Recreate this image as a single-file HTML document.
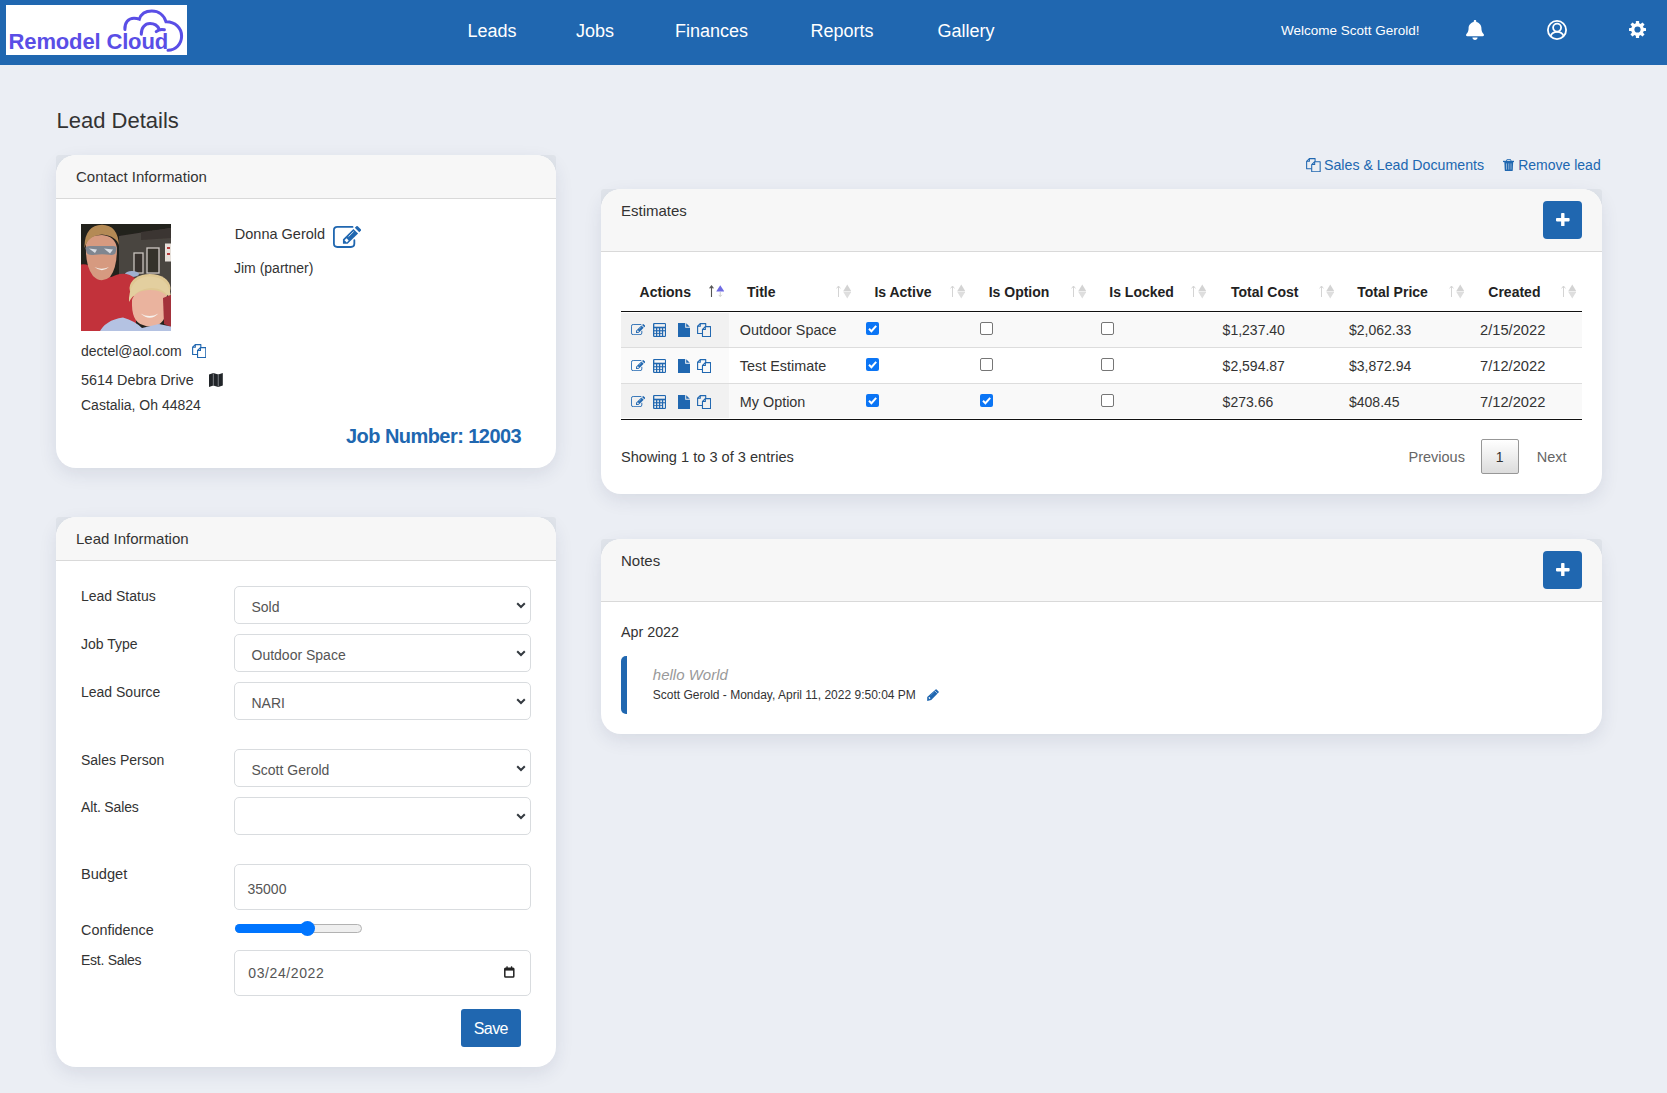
<!DOCTYPE html>
<html><head><meta charset="utf-8"><title>Lead Details</title>
<style>
html,body{margin:0;padding:0;}
body{width:1667px;height:1093px;overflow:hidden;background:#ebeef4;font-family:"Liberation Sans",sans-serif;position:relative;}
.a{position:absolute;box-sizing:border-box;}
.t{position:absolute;line-height:1;white-space:nowrap;}
</style></head><body>
<div class="a" style="left:0px;top:0px;width:1667px;height:65px;background:#2067b0;"></div>
<div class="a" style="left:6px;top:5px;width:181px;height:50px;background:#fff;"></div>
<div class="t" style="left:8.6px;top:31.2px;font-size:22px;color:#5a4ee6;font-weight:700;letter-spacing:-0.15px;">Remodel Cloud</div>
<svg class="a" style="left:120px;top:5px" width="66" height="50" viewBox="120 5 66 50">
<path d="M124.9 29.5 C124.4 22.4 128.5 18.2 134 18.2 C136 18.2 137.8 18.6 139.3 19.2 C141.2 13.4 146 11 151.8 11 C158.6 11 164 15 166 21.8 C175.2 21.6 181.6 28.2 181.6 36 C181.6 44.2 175.4 50.2 168 50.2" fill="none" stroke="#5a4ee6" stroke-width="3" stroke-linecap="round"/>
<path d="M141.3 34.3 C141 27.6 145 23.6 150 23.6 C154.2 23.6 157.6 25.8 159.2 29.2 M156.2 31.6 C158.2 29.9 161.6 29.2 164.4 29.8" fill="none" stroke="#5a4ee6" stroke-width="3" stroke-linecap="round"/>
</svg>
<div class="t" style="left:467.5px;top:21.8px;font-size:18px;color:#fff;">Leads</div>
<div class="t" style="left:576.0px;top:21.8px;font-size:18px;color:#fff;">Jobs</div>
<div class="t" style="left:675.0px;top:21.8px;font-size:18px;color:#fff;">Finances</div>
<div class="t" style="left:810.5px;top:21.8px;font-size:18px;color:#fff;">Reports</div>
<div class="t" style="left:937.5px;top:21.8px;font-size:18px;color:#fff;">Gallery</div>
<div class="t" style="left:1281.0px;top:24.1px;font-size:13.5px;color:#fff;">Welcome Scott Gerold!</div>
<svg class="a" style="left:1466px;top:20px;" width="18" height="20" viewBox="0 0 448 512" preserveAspectRatio="none"><path d="M224 0c-17.7 0-32 14.3-32 32V51.2C119 66 64 130.6 64 208v18.8c0 47-17.3 92.4-48.5 127.6l-7.4 8.3c-8.4 9.4-10.4 22.9-5.3 34.4S19.4 416 32 416H416c12.6 0 24-7.4 29.2-18.9s3.1-25-5.3-34.4l-7.4-8.3C401.3 319.2 384 273.9 384 226.8V208c0-77.4-55-142-128-156.8V32c0-17.7-14.3-32-32-32zm45.3 493.3c12-12 18.7-28.3 18.7-45.3H224 160c0 17 6.7 33.3 18.7 45.3s28.3 18.7 45.3 18.7s33.3-6.7 45.3-18.7z" fill="#fff"/></svg>
<svg class="a" style="left:1547px;top:20px;" width="20" height="20" viewBox="0 0 20 20" preserveAspectRatio="none"><circle cx="10" cy="10" r="9.1" fill="none" stroke="#fff" stroke-width="1.8"/><circle cx="10.1" cy="7.6" r="4.0" fill="none" stroke="#fff" stroke-width="1.8"/><path d="M3.6 16.2 C4.6 13.2 7 11.9 10.1 11.9 C13.2 11.9 15.6 13.2 16.6 16.2" fill="none" stroke="#fff" stroke-width="1.8"/></svg>
<svg class="a" style="left:1628.9px;top:21px;" width="17" height="17" viewBox="0 0 17 17" preserveAspectRatio="none"><circle cx="8.5" cy="8.5" r="6.4" fill="#fff"/><rect x="6.9" y="0" width="3.2" height="5" rx="0.5" transform="rotate(0 8.5 8.5)" fill="#fff"/><rect x="6.9" y="0" width="3.2" height="5" rx="0.5" transform="rotate(45 8.5 8.5)" fill="#fff"/><rect x="6.9" y="0" width="3.2" height="5" rx="0.5" transform="rotate(90 8.5 8.5)" fill="#fff"/><rect x="6.9" y="0" width="3.2" height="5" rx="0.5" transform="rotate(135 8.5 8.5)" fill="#fff"/><rect x="6.9" y="0" width="3.2" height="5" rx="0.5" transform="rotate(180 8.5 8.5)" fill="#fff"/><rect x="6.9" y="0" width="3.2" height="5" rx="0.5" transform="rotate(225 8.5 8.5)" fill="#fff"/><rect x="6.9" y="0" width="3.2" height="5" rx="0.5" transform="rotate(270 8.5 8.5)" fill="#fff"/><rect x="6.9" y="0" width="3.2" height="5" rx="0.5" transform="rotate(315 8.5 8.5)" fill="#fff"/><circle cx="8.5" cy="8.5" r="3.1" fill="#2067b0"/></svg>
<div class="t" style="left:56.5px;top:110.4px;font-size:22px;color:#333;">Lead Details</div>
<div class="a" style="left:56px;top:155px;width:500px;height:24px;background:#e1e5eb;border-radius:3px;"></div>
<div class="a" style="left:56px;top:155px;width:500px;height:313px;background:#fff;border-radius:20px;box-shadow:0 6px 18px rgba(40,50,90,0.10);overflow:hidden;"></div>
<div class="a" style="left:56px;top:155px;width:500px;height:44px;background:#f7f7f7;border-radius:20px 20px 0 0;border-bottom:1px solid #d9d9d9;"></div>
<div class="t" style="left:76.0px;top:169.3px;font-size:15px;color:#333;">Contact Information</div>
<svg class="a" style="left:81px;top:224px" width="90" height="107" viewBox="0 0 90 107">
<defs><filter id="bl" x="-5%" y="-5%" width="110%" height="110%"><feGaussianBlur stdDeviation="0.6"/></filter><clipPath id="cp"><rect width="90" height="107"/></clipPath></defs>
<g clip-path="url(#cp)"><g filter="url(#bl)">
<rect x="-2" y="-2" width="94" height="111" fill="#24201d"/>
<path d="M38 12 L90 4 V72 H38 Z" fill="#4a4440"/>
<path d="M60 8 L90 4 V14 L60 16 Z" fill="#3a3531"/>
<rect x="53" y="29" width="9" height="20" fill="#38332f" stroke="#c9c4be" stroke-width="1.3"/>
<rect x="66" y="24" width="12" height="25" fill="#35302c" stroke="#cfcac4" stroke-width="1.3"/>
<rect x="84" y="19.5" width="7" height="18" fill="#e6e0da"/>
<rect x="86" y="23" width="3" height="2" fill="#b43a3a"/><rect x="86" y="29" width="3" height="2" fill="#b43a3a"/>
<ellipse cx="51" cy="50" rx="7" ry="3" fill="#a0b0d0"/>
<path d="M-2 41 Q6 38 13 46 Q22 58 35 51 Q46 47 55 55 L55 109 H-2 Z" fill="#c2313a"/>
<path d="M5 20 Q4 42 12 52 Q20 60 29 53 Q36 44 36 24 Q34 12 21 11 Q7 11 5 20 Z" fill="#d69a80"/>
<path d="M3.5 22 Q4 1.5 21 0.8 Q37 1 38 22 Q36 12 21 10.5 Q7 11.5 3.5 24 Z" fill="#b48a55"/>
<path d="M4.5 24 Q5 22 9 22 L32 22 Q36 22 35.6 25 L34.3 29.6 Q33 31.6 28.5 30.8 Q21 29.5 14 30.8 Q6.5 31.8 5.6 28.6 Z" fill="#7f8690"/>
<path d="M8 24.5 L16 25.5 L14 29 Z M23 24.5 L32 25.5 L29 29.5 Z" fill="#d9dde3"/>
<path d="M13.5 43 Q20.5 46.5 28 43 Q21 49.5 13.5 43 Z" fill="#f3efe9"/>
<ellipse cx="69" cy="64" rx="20.5" ry="14" fill="#dfc893"/>
<path d="M51 76 Q50 98 62 101 Q69 104 77 101 Q87 96 86.5 74 Q83 66 69 66 Q54 66 51 76 Z" fill="#eab39e"/>
<path d="M48 74 Q50 52 70 52.5 Q90 54 90 76 Q84 64 70 64 Q55 65 48 78 Z" fill="#e3cf9f"/>
<path d="M82 74 L92 70 V104 L83 100 Z" fill="#a3303a"/>
<path d="M59.5 89.5 Q68.5 94.5 77.5 89.5 Q69 98 59.5 89.5 Z" fill="#f6f2ee"/>
<path d="M18 109 Q24 96 42 93.5 Q54 97 61 104 L78 100 L92 103 V109 Z" fill="#b4c2e2"/>
</g></g>
</svg>
<div class="t" style="left:234.8px;top:227.4px;font-size:14.5px;color:#333;">Donna Gerold</div>
<svg class="a" style="left:333px;top:226px;" width="28.2" height="22" viewBox="0 0 28 22" preserveAspectRatio="none"><path d="M19.4 0.9H4.3Q0.9 0.9 0.9 4.3V17.6Q0.9 21 4.3 21H17.8Q21.2 21 21.2 17.6V14.2" fill="none" stroke="#2067b0" stroke-width="1.8" stroke-linecap="round"/><path d="M20.3 3.0L24.9 7.4L14.5 17.8H9.9V13.3Z" fill="#2067b0"/><path d="M21.7 1.8L23.2 0.3Q23.9 -0.3 24.6 0.3L27.6 3.3Q28.2 4 27.6 4.7L26.1 6.2Z" fill="#2067b0"/><path d="M11.4 14.3L13.4 12.3L15.6 14.5L13.7 16.5Z" fill="#fff"/><path d="M11.4 15.2L12.9 16.6H11.4Z" fill="#2067b0"/><path d="M15.4 10.6L20.5 5.5" stroke="#fff" stroke-width="0.8"/></svg>
<div class="t" style="left:234.0px;top:260.5px;font-size:14px;color:#333;">Jim (partner)</div>
<div class="t" style="left:81.0px;top:344.1px;font-size:14px;color:#333;">dectel@aol.com</div>
<svg class="a" style="left:191.6px;top:343.8px;" width="14.4" height="14.2" viewBox="0 0 14 14" preserveAspectRatio="none"><path d="M3.2 0.6H8.6V10.4H0.6V3.2Z" fill="#fff" stroke="#2067b0" stroke-width="1.1" stroke-linejoin="round"/><path d="M0.8 3.2H3.2V0.8" fill="none" stroke="#2067b0" stroke-width="1.1"/><path d="M8.2 3.6H13.4V13.4H5.4V6.4Z" fill="#fff" stroke="#2067b0" stroke-width="1.1" stroke-linejoin="round"/><path d="M5.6 6.4H8.2V3.8" fill="none" stroke="#2067b0" stroke-width="1.1"/></svg>
<div class="t" style="left:81.0px;top:373.4px;font-size:14.4px;color:#333;">5614 Debra Drive</div>
<svg class="a" style="left:209.3px;top:373px;" width="13.8" height="14" viewBox="0 0 14 14" preserveAspectRatio="none"><path d="M0 1.6L4.4 0L9.4 1.6L14 0V12.4L9.4 14L4.4 12.4L0 14Z" fill="#212529"/><path d="M4.4 0.4V12.4M9.4 1.8V13.6" stroke="#8a8e92" stroke-width="0.9"/></svg>
<div class="t" style="left:81.0px;top:397.6px;font-size:14px;color:#333;">Castalia, Oh 44824</div>
<div class="t" style="left:346.0px;top:426.1px;font-size:20px;color:#2067b0;font-weight:700;letter-spacing:-0.55px;">Job Number: 12003</div>
<div class="a" style="left:56px;top:517px;width:500px;height:24px;background:#e1e5eb;border-radius:3px;"></div>
<div class="a" style="left:56px;top:517px;width:500px;height:550px;background:#fff;border-radius:20px;box-shadow:0 6px 18px rgba(40,50,90,0.10);overflow:hidden;"></div>
<div class="a" style="left:56px;top:517px;width:500px;height:44px;background:#f7f7f7;border-radius:20px 20px 0 0;border-bottom:1px solid #d9d9d9;"></div>
<div class="t" style="left:76.0px;top:531.1px;font-size:15px;color:#333;">Lead Information</div>
<div class="t" style="left:81.0px;top:589.1px;font-size:14px;color:#333;">Lead Status</div>
<div class="t" style="left:81.0px;top:637.1px;font-size:14px;color:#333;">Job Type</div>
<div class="t" style="left:81.0px;top:685.4px;font-size:14px;color:#333;">Lead Source</div>
<div class="t" style="left:81.0px;top:752.7px;font-size:14px;color:#333;">Sales Person</div>
<div class="t" style="left:81.0px;top:800.1px;font-size:14px;color:#333;letter-spacing:-0.15px;">Alt. Sales</div>
<div class="t" style="left:81.0px;top:867.0px;font-size:14.6px;color:#333;">Budget</div>
<div class="t" style="left:81.0px;top:923.1px;font-size:14.4px;color:#333;">Confidence</div>
<div class="t" style="left:81.0px;top:953.1px;font-size:14px;color:#333;letter-spacing:-0.27px;">Est. Sales</div>
<div class="a" style="left:234px;top:586px;width:297px;height:38px;background:#fff;border:1px solid #d9dcdf;border-radius:5px;"></div>
<div class="t" style="left:251.5px;top:599.6px;font-size:14px;color:#555;">Sold</div>
<svg class="a" style="left:516px;top:602px;" width="10" height="7" viewBox="0 0 10 7" preserveAspectRatio="none"><path d="M1.2 1.2 L5 5 L8.8 1.2" fill="none" stroke="#343a40" stroke-width="2"/></svg>
<div class="a" style="left:234px;top:634px;width:297px;height:38px;background:#fff;border:1px solid #d9dcdf;border-radius:5px;"></div>
<div class="t" style="left:251.5px;top:647.6px;font-size:14px;color:#555;">Outdoor Space</div>
<svg class="a" style="left:516px;top:650px;" width="10" height="7" viewBox="0 0 10 7" preserveAspectRatio="none"><path d="M1.2 1.2 L5 5 L8.8 1.2" fill="none" stroke="#343a40" stroke-width="2"/></svg>
<div class="a" style="left:234px;top:682px;width:297px;height:38px;background:#fff;border:1px solid #d9dcdf;border-radius:5px;"></div>
<div class="t" style="left:251.5px;top:695.6px;font-size:14px;color:#555;">NARI</div>
<svg class="a" style="left:516px;top:698px;" width="10" height="7" viewBox="0 0 10 7" preserveAspectRatio="none"><path d="M1.2 1.2 L5 5 L8.8 1.2" fill="none" stroke="#343a40" stroke-width="2"/></svg>
<div class="a" style="left:234px;top:749px;width:297px;height:38px;background:#fff;border:1px solid #d9dcdf;border-radius:5px;"></div>
<div class="t" style="left:251.5px;top:762.6px;font-size:14px;color:#555;">Scott Gerold</div>
<svg class="a" style="left:516px;top:765px;" width="10" height="7" viewBox="0 0 10 7" preserveAspectRatio="none"><path d="M1.2 1.2 L5 5 L8.8 1.2" fill="none" stroke="#343a40" stroke-width="2"/></svg>
<div class="a" style="left:234px;top:797px;width:297px;height:38px;background:#fff;border:1px solid #d9dcdf;border-radius:5px;"></div>
<svg class="a" style="left:516px;top:813px;" width="10" height="7" viewBox="0 0 10 7" preserveAspectRatio="none"><path d="M1.2 1.2 L5 5 L8.8 1.2" fill="none" stroke="#343a40" stroke-width="2"/></svg>
<div class="a" style="left:234px;top:864px;width:297px;height:46px;background:#fff;border:1px solid #d9dcdf;border-radius:5px;"></div>
<div class="t" style="left:247.5px;top:881.5px;font-size:14px;color:#555;">35000</div>
<div class="a" style="left:234.5px;top:923.5px;width:127.5px;height:9px;background:#efefef;border:1px solid #b2b2b2;border-radius:5px;"></div>
<div class="a" style="left:234.5px;top:923.5px;width:74px;height:9px;background:#0075ff;border-radius:5px 0 0 5px;"></div>
<div class="a" style="left:299.5px;top:920.5px;width:15px;height:15px;background:#0075ff;border-radius:50%;"></div>
<div class="a" style="left:234px;top:950px;width:297px;height:46px;background:#fff;border:1px solid #d9dcdf;border-radius:5px;"></div>
<div class="t" style="left:248.3px;top:966.3px;font-size:14px;color:#555;letter-spacing:0.6px;">03/24/2022</div>
<svg class="a" style="left:504px;top:966px;" width="10.6" height="11.8" viewBox="0 0 10.6 11.8" preserveAspectRatio="none"><rect x="0.8" y="2.2" width="9" height="8.8" rx="0.8" fill="none" stroke="#222" stroke-width="1.5"/><rect x="0.8" y="2" width="9" height="2.6" fill="#222"/><rect x="2.4" y="0.3" width="1.3" height="2.4" fill="#222"/><rect x="6.9" y="0.3" width="1.3" height="2.4" fill="#222"/></svg>
<div class="a" style="left:461px;top:1009px;width:60px;height:38px;background:#2067b0;border-radius:3px;"></div>
<div class="t" style="left:473.8px;top:1020.5px;font-size:16px;color:#fff;letter-spacing:-0.6px;">Save</div>
<svg class="a" style="left:1305.8px;top:157.7px;" width="14.8" height="14.4" viewBox="0 0 14 14" preserveAspectRatio="none"><path d="M3.2 0.6H8.6V10.4H0.6V3.2Z" fill="#ebeef3" stroke="#2067b0" stroke-width="1.0" stroke-linejoin="round"/><path d="M0.8 3.2H3.2V0.8" fill="none" stroke="#2067b0" stroke-width="1.0"/><path d="M8.2 3.6H13.4V13.4H5.4V6.4Z" fill="#ebeef3" stroke="#2067b0" stroke-width="1.0" stroke-linejoin="round"/><path d="M5.6 6.4H8.2V3.8" fill="none" stroke="#2067b0" stroke-width="1.0"/></svg>
<div class="t" style="left:1324.0px;top:157.7px;font-size:14.2px;color:#2067b0;">Sales &amp; Lead Documents</div>
<svg class="a" style="left:1502.9px;top:158.9px;" width="11.5" height="12.1" viewBox="0 0 11.5 12.1" preserveAspectRatio="none"><path d="M3.4 1.9L4.2 0.3H7.3L8.1 1.9" fill="none" stroke="#2067b0" stroke-width="1"/><path d="M0 1.8H11.5V3.1H0Z" fill="#2067b0"/><path d="M1.3 3.1H10.2L9.7 11.4Q9.6 12.1 9 12.1H2.5Q1.9 12.1 1.8 11.4Z" fill="#2067b0"/><path d="M3.5 4.4V10.6M5.75 4.4V10.6M8 4.4V10.6" stroke="#aac3de" stroke-width="0.8"/></svg>
<div class="t" style="left:1518.2px;top:157.8px;font-size:14px;color:#2067b0;">Remove lead</div>
<div class="a" style="left:601px;top:189px;width:1001px;height:24px;background:#e1e5eb;border-radius:3px;"></div>
<div class="a" style="left:601px;top:189px;width:1001px;height:305px;background:#fff;border-radius:20px;box-shadow:0 6px 18px rgba(40,50,90,0.10);overflow:hidden;"></div>
<div class="a" style="left:601px;top:189px;width:1001px;height:63px;background:#f7f7f7;border-radius:20px 20px 0 0;border-bottom:1px solid #d9d9d9;"></div>
<div class="t" style="left:621.0px;top:203.3px;font-size:15px;color:#333;">Estimates</div>
<div class="a" style="left:1543px;top:201px;width:39px;height:38px;background:#2067b0;border-radius:4px;"></div>
<svg class="a" style="left:1556px;top:213px;" width="13.6" height="13.4" viewBox="0 0 13.6 13.4" preserveAspectRatio="none"><rect x="5.1" y="0" width="3.4" height="13.4" rx="0.8" fill="#fff"/><rect x="0" y="5" width="13.6" height="3.4" rx="0.8" fill="#fff"/></svg>
<div class="a" style="left:621px;top:311px;width:961px;height:1px;background:#111;"></div>
<div class="a" style="left:621px;top:313px;width:961px;height:34px;background:#f9f9f9;"></div>
<div class="a" style="left:621px;top:313px;width:108px;height:34px;background:#f1f1f1;"></div>
<svg class="a" style="left:631.1px;top:323.7px;" width="14.3" height="11.2" viewBox="0 0 28 22" preserveAspectRatio="none"><path d="M19.4 0.9H4.3Q0.9 0.9 0.9 4.3V17.6Q0.9 21 4.3 21H17.8Q21.2 21 21.2 17.6V14.2" fill="none" stroke="#2067b0" stroke-width="1.8" stroke-linecap="round"/><path d="M20.3 3.0L24.9 7.4L14.5 17.8H9.9V13.3Z" fill="#2067b0"/><path d="M21.7 1.8L23.2 0.3Q23.9 -0.3 24.6 0.3L27.6 3.3Q28.2 4 27.6 4.7L26.1 6.2Z" fill="#2067b0"/><path d="M11.4 14.3L13.4 12.3L15.6 14.5L13.7 16.5Z" fill="#f1f1f1"/><path d="M11.4 15.2L12.9 16.6H11.4Z" fill="#2067b0"/><path d="M15.4 10.6L20.5 5.5" stroke="#f1f1f1" stroke-width="0.8"/></svg>
<svg class="a" style="left:652.5px;top:323px;" width="13" height="14" viewBox="0 0 13 14" preserveAspectRatio="none"><rect x="0" y="0" width="13" height="14" rx="1.2" fill="#2067b0"/><rect x="1.35" y="1.1" width="10.6" height="2.6" fill="#f1f1f1"/><rect x="1.35" y="5.3" width="1.6" height="1.9" fill="#f1f1f1"/><rect x="1.35" y="8.3" width="1.6" height="1.9" fill="#f1f1f1"/><rect x="1.35" y="11.0" width="1.6" height="1.9" fill="#f1f1f1"/><rect x="4.3" y="5.3" width="1.6" height="1.9" fill="#f1f1f1"/><rect x="4.3" y="8.3" width="1.6" height="1.9" fill="#f1f1f1"/><rect x="4.3" y="11.0" width="1.6" height="1.9" fill="#f1f1f1"/><rect x="7.3" y="5.3" width="1.6" height="1.9" fill="#f1f1f1"/><rect x="7.3" y="8.3" width="1.6" height="1.9" fill="#f1f1f1"/><rect x="7.3" y="11.0" width="1.6" height="1.9" fill="#f1f1f1"/><rect x="10.2" y="5.3" width="1.7" height="1.9" fill="#f1f1f1"/><rect x="10.2" y="8.3" width="1.7" height="4.6" fill="#f1f1f1"/></svg>
<svg class="a" style="left:677.5px;top:323px;" width="12" height="14" viewBox="0 0 12 14" preserveAspectRatio="none"><path d="M0 0H7.2V4.8H12V14H0Z" fill="#2067b0"/><path d="M8.2 0.2L11.8 3.8H8.2Z" fill="#2067b0"/></svg>
<svg class="a" style="left:696.8px;top:322.8px;" width="14.2" height="14.2" viewBox="0 0 14 14" preserveAspectRatio="none"><path d="M3.2 0.6H8.6V10.4H0.6V3.2Z" fill="#f1f1f1" stroke="#2067b0" stroke-width="1.1" stroke-linejoin="round"/><path d="M0.8 3.2H3.2V0.8" fill="none" stroke="#2067b0" stroke-width="1.1"/><path d="M8.2 3.6H13.4V13.4H5.4V6.4Z" fill="#f1f1f1" stroke="#2067b0" stroke-width="1.1" stroke-linejoin="round"/><path d="M5.6 6.4H8.2V3.8" fill="none" stroke="#2067b0" stroke-width="1.1"/></svg>
<div class="t" style="left:739.8px;top:322.8px;font-size:14.4px;color:#333;">Outdoor Space</div>
<svg class="a" style="left:866px;top:322px;" width="13" height="13" viewBox="0 0 13 13" preserveAspectRatio="none"><rect x="0" y="0" width="13" height="13" rx="2" fill="#0b75f5"/><path d="M3 6.8 L5.4 9.2 L10.2 3.8" fill="none" stroke="#fff" stroke-width="2"/></svg>
<div class="a" style="left:980px;top:322px;width:13px;height:13px;background:#fff;border:1px solid #767676;border-radius:2px;"></div>
<div class="a" style="left:1101px;top:322px;width:13px;height:13px;background:#fff;border:1px solid #767676;border-radius:2px;"></div>
<div class="t" style="left:1222.6px;top:323.1px;font-size:14px;color:#333;">$1,237.40</div>
<div class="t" style="left:1349.0px;top:323.1px;font-size:14px;color:#333;">$2,062.33</div>
<div class="t" style="left:1480.0px;top:322.6px;font-size:14.7px;color:#333;">2/15/2022</div>
<div class="a" style="left:621px;top:348px;width:961px;height:35px;background:#fff;"></div>
<div class="a" style="left:621px;top:348px;width:108px;height:35px;background:#fafafa;"></div>
<div class="a" style="left:621px;top:347px;width:961px;height:1px;background:#ddd;"></div>
<svg class="a" style="left:631.1px;top:359.7px;" width="14.3" height="11.2" viewBox="0 0 28 22" preserveAspectRatio="none"><path d="M19.4 0.9H4.3Q0.9 0.9 0.9 4.3V17.6Q0.9 21 4.3 21H17.8Q21.2 21 21.2 17.6V14.2" fill="none" stroke="#2067b0" stroke-width="1.8" stroke-linecap="round"/><path d="M20.3 3.0L24.9 7.4L14.5 17.8H9.9V13.3Z" fill="#2067b0"/><path d="M21.7 1.8L23.2 0.3Q23.9 -0.3 24.6 0.3L27.6 3.3Q28.2 4 27.6 4.7L26.1 6.2Z" fill="#2067b0"/><path d="M11.4 14.3L13.4 12.3L15.6 14.5L13.7 16.5Z" fill="#fafafa"/><path d="M11.4 15.2L12.9 16.6H11.4Z" fill="#2067b0"/><path d="M15.4 10.6L20.5 5.5" stroke="#fafafa" stroke-width="0.8"/></svg>
<svg class="a" style="left:652.5px;top:359px;" width="13" height="14" viewBox="0 0 13 14" preserveAspectRatio="none"><rect x="0" y="0" width="13" height="14" rx="1.2" fill="#2067b0"/><rect x="1.35" y="1.1" width="10.6" height="2.6" fill="#fafafa"/><rect x="1.35" y="5.3" width="1.6" height="1.9" fill="#fafafa"/><rect x="1.35" y="8.3" width="1.6" height="1.9" fill="#fafafa"/><rect x="1.35" y="11.0" width="1.6" height="1.9" fill="#fafafa"/><rect x="4.3" y="5.3" width="1.6" height="1.9" fill="#fafafa"/><rect x="4.3" y="8.3" width="1.6" height="1.9" fill="#fafafa"/><rect x="4.3" y="11.0" width="1.6" height="1.9" fill="#fafafa"/><rect x="7.3" y="5.3" width="1.6" height="1.9" fill="#fafafa"/><rect x="7.3" y="8.3" width="1.6" height="1.9" fill="#fafafa"/><rect x="7.3" y="11.0" width="1.6" height="1.9" fill="#fafafa"/><rect x="10.2" y="5.3" width="1.7" height="1.9" fill="#fafafa"/><rect x="10.2" y="8.3" width="1.7" height="4.6" fill="#fafafa"/></svg>
<svg class="a" style="left:677.5px;top:359px;" width="12" height="14" viewBox="0 0 12 14" preserveAspectRatio="none"><path d="M0 0H7.2V4.8H12V14H0Z" fill="#2067b0"/><path d="M8.2 0.2L11.8 3.8H8.2Z" fill="#2067b0"/></svg>
<svg class="a" style="left:696.8px;top:358.8px;" width="14.2" height="14.2" viewBox="0 0 14 14" preserveAspectRatio="none"><path d="M3.2 0.6H8.6V10.4H0.6V3.2Z" fill="#fafafa" stroke="#2067b0" stroke-width="1.1" stroke-linejoin="round"/><path d="M0.8 3.2H3.2V0.8" fill="none" stroke="#2067b0" stroke-width="1.1"/><path d="M8.2 3.6H13.4V13.4H5.4V6.4Z" fill="#fafafa" stroke="#2067b0" stroke-width="1.1" stroke-linejoin="round"/><path d="M5.6 6.4H8.2V3.8" fill="none" stroke="#2067b0" stroke-width="1.1"/></svg>
<div class="t" style="left:739.8px;top:358.8px;font-size:14.4px;color:#333;">Test Estimate</div>
<svg class="a" style="left:866px;top:358px;" width="13" height="13" viewBox="0 0 13 13" preserveAspectRatio="none"><rect x="0" y="0" width="13" height="13" rx="2" fill="#0b75f5"/><path d="M3 6.8 L5.4 9.2 L10.2 3.8" fill="none" stroke="#fff" stroke-width="2"/></svg>
<div class="a" style="left:980px;top:358px;width:13px;height:13px;background:#fff;border:1px solid #767676;border-radius:2px;"></div>
<div class="a" style="left:1101px;top:358px;width:13px;height:13px;background:#fff;border:1px solid #767676;border-radius:2px;"></div>
<div class="t" style="left:1222.6px;top:359.1px;font-size:14px;color:#333;">$2,594.87</div>
<div class="t" style="left:1349.0px;top:359.1px;font-size:14px;color:#333;">$3,872.94</div>
<div class="t" style="left:1480.0px;top:358.6px;font-size:14.7px;color:#333;">7/12/2022</div>
<div class="a" style="left:621px;top:384px;width:961px;height:34px;background:#f9f9f9;"></div>
<div class="a" style="left:621px;top:384px;width:108px;height:34px;background:#f1f1f1;"></div>
<div class="a" style="left:621px;top:383px;width:961px;height:1px;background:#ddd;"></div>
<svg class="a" style="left:631.1px;top:395.7px;" width="14.3" height="11.2" viewBox="0 0 28 22" preserveAspectRatio="none"><path d="M19.4 0.9H4.3Q0.9 0.9 0.9 4.3V17.6Q0.9 21 4.3 21H17.8Q21.2 21 21.2 17.6V14.2" fill="none" stroke="#2067b0" stroke-width="1.8" stroke-linecap="round"/><path d="M20.3 3.0L24.9 7.4L14.5 17.8H9.9V13.3Z" fill="#2067b0"/><path d="M21.7 1.8L23.2 0.3Q23.9 -0.3 24.6 0.3L27.6 3.3Q28.2 4 27.6 4.7L26.1 6.2Z" fill="#2067b0"/><path d="M11.4 14.3L13.4 12.3L15.6 14.5L13.7 16.5Z" fill="#f1f1f1"/><path d="M11.4 15.2L12.9 16.6H11.4Z" fill="#2067b0"/><path d="M15.4 10.6L20.5 5.5" stroke="#f1f1f1" stroke-width="0.8"/></svg>
<svg class="a" style="left:652.5px;top:395px;" width="13" height="14" viewBox="0 0 13 14" preserveAspectRatio="none"><rect x="0" y="0" width="13" height="14" rx="1.2" fill="#2067b0"/><rect x="1.35" y="1.1" width="10.6" height="2.6" fill="#f1f1f1"/><rect x="1.35" y="5.3" width="1.6" height="1.9" fill="#f1f1f1"/><rect x="1.35" y="8.3" width="1.6" height="1.9" fill="#f1f1f1"/><rect x="1.35" y="11.0" width="1.6" height="1.9" fill="#f1f1f1"/><rect x="4.3" y="5.3" width="1.6" height="1.9" fill="#f1f1f1"/><rect x="4.3" y="8.3" width="1.6" height="1.9" fill="#f1f1f1"/><rect x="4.3" y="11.0" width="1.6" height="1.9" fill="#f1f1f1"/><rect x="7.3" y="5.3" width="1.6" height="1.9" fill="#f1f1f1"/><rect x="7.3" y="8.3" width="1.6" height="1.9" fill="#f1f1f1"/><rect x="7.3" y="11.0" width="1.6" height="1.9" fill="#f1f1f1"/><rect x="10.2" y="5.3" width="1.7" height="1.9" fill="#f1f1f1"/><rect x="10.2" y="8.3" width="1.7" height="4.6" fill="#f1f1f1"/></svg>
<svg class="a" style="left:677.5px;top:395px;" width="12" height="14" viewBox="0 0 12 14" preserveAspectRatio="none"><path d="M0 0H7.2V4.8H12V14H0Z" fill="#2067b0"/><path d="M8.2 0.2L11.8 3.8H8.2Z" fill="#2067b0"/></svg>
<svg class="a" style="left:696.8px;top:394.8px;" width="14.2" height="14.2" viewBox="0 0 14 14" preserveAspectRatio="none"><path d="M3.2 0.6H8.6V10.4H0.6V3.2Z" fill="#f1f1f1" stroke="#2067b0" stroke-width="1.1" stroke-linejoin="round"/><path d="M0.8 3.2H3.2V0.8" fill="none" stroke="#2067b0" stroke-width="1.1"/><path d="M8.2 3.6H13.4V13.4H5.4V6.4Z" fill="#f1f1f1" stroke="#2067b0" stroke-width="1.1" stroke-linejoin="round"/><path d="M5.6 6.4H8.2V3.8" fill="none" stroke="#2067b0" stroke-width="1.1"/></svg>
<div class="t" style="left:739.8px;top:394.8px;font-size:14.4px;color:#333;">My Option</div>
<svg class="a" style="left:866px;top:394px;" width="13" height="13" viewBox="0 0 13 13" preserveAspectRatio="none"><rect x="0" y="0" width="13" height="13" rx="2" fill="#0b75f5"/><path d="M3 6.8 L5.4 9.2 L10.2 3.8" fill="none" stroke="#fff" stroke-width="2"/></svg>
<svg class="a" style="left:980px;top:394px;" width="13" height="13" viewBox="0 0 13 13" preserveAspectRatio="none"><rect x="0" y="0" width="13" height="13" rx="2" fill="#0b75f5"/><path d="M3 6.8 L5.4 9.2 L10.2 3.8" fill="none" stroke="#fff" stroke-width="2"/></svg>
<div class="a" style="left:1101px;top:394px;width:13px;height:13px;background:#fff;border:1px solid #767676;border-radius:2px;"></div>
<div class="t" style="left:1222.6px;top:395.1px;font-size:14px;color:#333;">$273.66</div>
<div class="t" style="left:1349.0px;top:395.1px;font-size:14px;color:#333;">$408.45</div>
<div class="t" style="left:1480.0px;top:394.6px;font-size:14.7px;color:#333;">7/12/2022</div>
<div class="a" style="left:621px;top:419px;width:961px;height:1px;background:#111;"></div>
<div class="t" style="left:639.6px;top:285.1px;font-size:14px;color:#222;font-weight:700;">Actions</div>
<svg class="a" style="left:708.5px;top:285px;" width="5" height="12" viewBox="0 0 5 12" preserveAspectRatio="none"><path d="M2.5 1V12M0.6 3.4L2.5 1L4.4 3.4" fill="none" stroke="#555" stroke-width="1.1"/></svg>
<svg class="a" style="left:715.5px;top:285px;" width="8.5" height="12" viewBox="0 0 8.5 12" preserveAspectRatio="none"><path d="M4.25 0.3 L8.3 6.5 L0.2 6.5 Z" fill="#6f6be3"/><path d="M4.25 7V11.5M2.6 9.8L4.25 11.5L5.9 9.8" fill="none" stroke="#c8c8c8" stroke-width="0.9"/></svg>
<div class="t" style="left:747.0px;top:285.1px;font-size:14px;color:#222;font-weight:700;">Title</div>
<svg class="a" style="left:835.5px;top:285px;" width="5" height="12" viewBox="0 0 5 12" preserveAspectRatio="none"><path d="M2.5 1V12M0.6 3.4L2.5 1L4.4 3.4" fill="none" stroke="#d4d4d4" stroke-width="1"/></svg>
<svg class="a" style="left:842.5px;top:284px;" width="8.5" height="15" viewBox="0 0 8.5 15" preserveAspectRatio="none"><path d="M4.25 0.5 L8.3 7.2 L0.2 7.2 Z" fill="#d3d3d3"/><path d="M4.25 14.5 L8.3 7.8 L0.2 7.8 Z" fill="#dedede"/></svg>
<div class="t" style="left:874.4px;top:285.1px;font-size:14px;color:#222;font-weight:700;">Is Active</div>
<svg class="a" style="left:949.5px;top:285px;" width="5" height="12" viewBox="0 0 5 12" preserveAspectRatio="none"><path d="M2.5 1V12M0.6 3.4L2.5 1L4.4 3.4" fill="none" stroke="#d4d4d4" stroke-width="1"/></svg>
<svg class="a" style="left:956.5px;top:284px;" width="8.5" height="15" viewBox="0 0 8.5 15" preserveAspectRatio="none"><path d="M4.25 0.5 L8.3 7.2 L0.2 7.2 Z" fill="#d3d3d3"/><path d="M4.25 14.5 L8.3 7.8 L0.2 7.8 Z" fill="#dedede"/></svg>
<div class="t" style="left:988.7px;top:285.1px;font-size:14px;color:#222;font-weight:700;">Is Option</div>
<svg class="a" style="left:1070.5px;top:285px;" width="5" height="12" viewBox="0 0 5 12" preserveAspectRatio="none"><path d="M2.5 1V12M0.6 3.4L2.5 1L4.4 3.4" fill="none" stroke="#d4d4d4" stroke-width="1"/></svg>
<svg class="a" style="left:1077.5px;top:284px;" width="8.5" height="15" viewBox="0 0 8.5 15" preserveAspectRatio="none"><path d="M4.25 0.5 L8.3 7.2 L0.2 7.2 Z" fill="#d3d3d3"/><path d="M4.25 14.5 L8.3 7.8 L0.2 7.8 Z" fill="#dedede"/></svg>
<div class="t" style="left:1109.3px;top:285.1px;font-size:14px;color:#222;font-weight:700;">Is Locked</div>
<svg class="a" style="left:1190.5px;top:285px;" width="5" height="12" viewBox="0 0 5 12" preserveAspectRatio="none"><path d="M2.5 1V12M0.6 3.4L2.5 1L4.4 3.4" fill="none" stroke="#d4d4d4" stroke-width="1"/></svg>
<svg class="a" style="left:1197.5px;top:284px;" width="8.5" height="15" viewBox="0 0 8.5 15" preserveAspectRatio="none"><path d="M4.25 0.5 L8.3 7.2 L0.2 7.2 Z" fill="#d3d3d3"/><path d="M4.25 14.5 L8.3 7.8 L0.2 7.8 Z" fill="#dedede"/></svg>
<div class="t" style="left:1231.0px;top:285.1px;font-size:14px;color:#222;font-weight:700;">Total Cost</div>
<svg class="a" style="left:1318.5px;top:285px;" width="5" height="12" viewBox="0 0 5 12" preserveAspectRatio="none"><path d="M2.5 1V12M0.6 3.4L2.5 1L4.4 3.4" fill="none" stroke="#d4d4d4" stroke-width="1"/></svg>
<svg class="a" style="left:1325.5px;top:284px;" width="8.5" height="15" viewBox="0 0 8.5 15" preserveAspectRatio="none"><path d="M4.25 0.5 L8.3 7.2 L0.2 7.2 Z" fill="#d3d3d3"/><path d="M4.25 14.5 L8.3 7.8 L0.2 7.8 Z" fill="#dedede"/></svg>
<div class="t" style="left:1357.3px;top:285.1px;font-size:14px;color:#222;font-weight:700;">Total Price</div>
<svg class="a" style="left:1448.5px;top:285px;" width="5" height="12" viewBox="0 0 5 12" preserveAspectRatio="none"><path d="M2.5 1V12M0.6 3.4L2.5 1L4.4 3.4" fill="none" stroke="#d4d4d4" stroke-width="1"/></svg>
<svg class="a" style="left:1455.5px;top:284px;" width="8.5" height="15" viewBox="0 0 8.5 15" preserveAspectRatio="none"><path d="M4.25 0.5 L8.3 7.2 L0.2 7.2 Z" fill="#d3d3d3"/><path d="M4.25 14.5 L8.3 7.8 L0.2 7.8 Z" fill="#dedede"/></svg>
<div class="t" style="left:1488.3px;top:285.1px;font-size:14px;color:#222;font-weight:700;">Created</div>
<svg class="a" style="left:1560.5px;top:285px;" width="5" height="12" viewBox="0 0 5 12" preserveAspectRatio="none"><path d="M2.5 1V12M0.6 3.4L2.5 1L4.4 3.4" fill="none" stroke="#d4d4d4" stroke-width="1"/></svg>
<svg class="a" style="left:1567.5px;top:284px;" width="8.5" height="15" viewBox="0 0 8.5 15" preserveAspectRatio="none"><path d="M4.25 0.5 L8.3 7.2 L0.2 7.2 Z" fill="#d3d3d3"/><path d="M4.25 14.5 L8.3 7.8 L0.2 7.8 Z" fill="#dedede"/></svg>
<div class="t" style="left:621.0px;top:449.6px;font-size:14.6px;color:#333;">Showing 1 to 3 of 3 entries</div>
<div class="t" style="left:1408.5px;top:450.1px;font-size:14.5px;color:#666;">Previous</div>
<div class="a" style="left:1481px;top:439px;width:38px;height:35px;background:linear-gradient(#fff,#dcdcdc);border:1px solid #979797;border-radius:2px;"></div>
<div class="t" style="left:1495.8px;top:449.7px;font-size:14px;color:#333;">1</div>
<div class="t" style="left:1536.8px;top:450.1px;font-size:14.5px;color:#666;">Next</div>
<div class="a" style="left:601px;top:539px;width:1001px;height:24px;background:#e1e5eb;border-radius:3px;"></div>
<div class="a" style="left:601px;top:539px;width:1001px;height:195px;background:#fff;border-radius:20px;box-shadow:0 6px 18px rgba(40,50,90,0.10);overflow:hidden;"></div>
<div class="a" style="left:601px;top:539px;width:1001px;height:63px;background:#f7f7f7;border-radius:20px 20px 0 0;border-bottom:1px solid #d9d9d9;"></div>
<div class="t" style="left:621.0px;top:553.3px;font-size:15px;color:#333;">Notes</div>
<div class="a" style="left:1543px;top:551px;width:39px;height:38px;background:#2067b0;border-radius:4px;"></div>
<svg class="a" style="left:1556px;top:563px;" width="13.6" height="13.4" viewBox="0 0 13.6 13.4" preserveAspectRatio="none"><rect x="5.1" y="0" width="3.4" height="13.4" rx="0.8" fill="#fff"/><rect x="0" y="5" width="13.6" height="3.4" rx="0.8" fill="#fff"/></svg>
<div class="t" style="left:621.0px;top:625.2px;font-size:14.3px;color:#333;">Apr 2022</div>
<div class="a" style="left:621px;top:656px;width:6px;height:58px;background:#2067b0;border-radius:5px 0 0 5px;"></div>
<div class="t" style="left:652.8px;top:667.3px;font-size:15px;color:#999;font-style:italic;">hello World</div>
<div class="t" style="left:652.8px;top:689.3px;font-size:12px;color:#333;">Scott Gerold - Monday, April 11, 2022 9:50:04 PM</div>
<svg class="a" style="left:926.9px;top:688.9px;" width="12.2" height="12.1" viewBox="0 0 12.2 12.1" preserveAspectRatio="none"><path d="M8.6 0.6Q9.1 0.1 9.6 0.6L11.6 2.6Q12.1 3.1 11.6 3.6L4.2 11L0.2 12V7.9Z" fill="#2067b0"/><path d="M7.6 1.6L10.6 4.6" stroke="#fff" stroke-width="0.6"/><path d="M1.4 8.8L2.6 7.9L3.5 9.3L2.4 10.1Z" fill="#fff"/><path d="M3.6 6.5L7.6 2.6" stroke="#6aa0d8" stroke-width="0.5"/></svg>
</body></html>
